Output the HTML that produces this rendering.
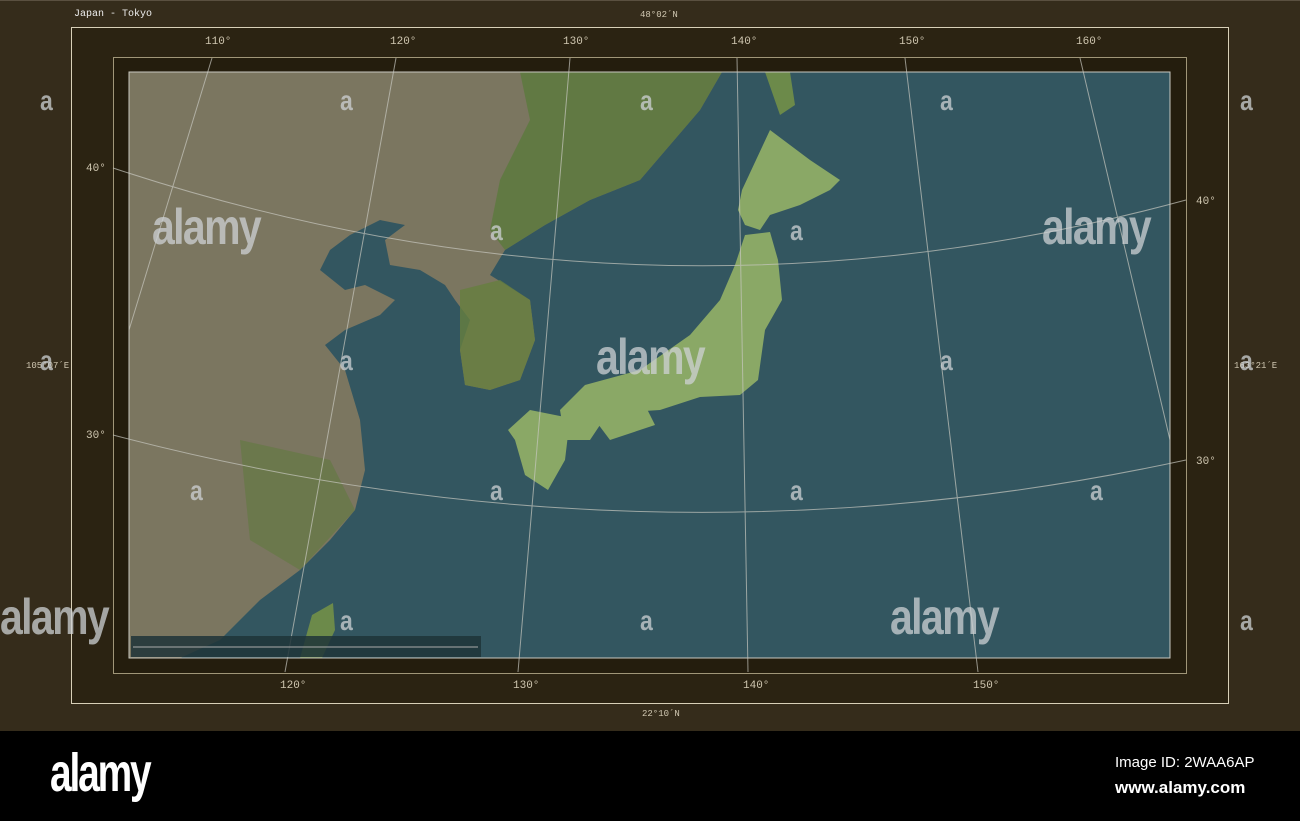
<!DOCTYPE html>
<html><head><meta charset="utf-8"><style>
html,body{margin:0;padding:0;width:1300px;height:821px;overflow:hidden;background:#000;font-family:"Liberation Mono",monospace}
.t{position:absolute;color:#cfc6b0;font-size:11px}
.g{position:absolute;font-family:"Liberation Sans",sans-serif;font-weight:bold;color:rgba(205,210,212,.75);letter-spacing:-2px;transform:scaleX(.82);transform-origin:left top}
</style></head><body>
<div style="position:absolute;left:0;top:0;width:1300px;height:730px;background:#352c1b;border-top:1px solid #5a5040"></div>
<div style="position:absolute;left:71px;top:27px;width:1156px;height:675px;background:#2b2312;border:1px solid #d8d0b8"></div>
<div style="position:absolute;left:113px;top:57px;width:1072px;height:615px;background:#241d0d;border:1px solid #a09678"></div>
<div class="t" style="left:74px;top:9px;font-size:10px;color:#eee">Japan - Tokyo</div>
<div class="t" style="left:640px;top:10px;font-size:9px">48°02´N</div>
<div class="t" style="left:642px;top:709px;font-size:9px">22°10´N</div>
<div class="t" style="left:26px;top:361px;font-size:9px">105°07´E</div>
<div class="t" style="left:1234px;top:361px;font-size:9px">163°21´E</div>
<div class="t" style="left:205px;top:36px">110°</div><div class="t" style="left:390px;top:36px">120°</div><div class="t" style="left:563px;top:36px">130°</div><div class="t" style="left:731px;top:36px">140°</div><div class="t" style="left:899px;top:36px">150°</div><div class="t" style="left:1076px;top:36px">160°</div>
<div class="t" style="left:280px;top:680px">120°</div><div class="t" style="left:513px;top:680px">130°</div><div class="t" style="left:743px;top:680px">140°</div><div class="t" style="left:973px;top:680px">150°</div>
<div class="t" style="left:86px;top:163px">40°</div><div class="t" style="left:86px;top:430px">30°</div>
<div class="t" style="left:1196px;top:196px">40°</div><div class="t" style="left:1196px;top:456px">30°</div>
<svg style="position:absolute;left:0;top:0" width="1300" height="730">
<rect x="129" y="72" width="1041" height="586" fill="#335660"/>
<polygon fill="#7b7660" points="129,72 722,72 700,110 640,180 590,200 545,225 505,250 490,275 530,300 535,340 520,380 490,390 465,385 460,350 470,320 455,300 445,285 420,270 390,265 385,240 405,225 380,220 350,235 330,250 320,270 345,290 365,285 395,300 380,315 345,330 325,345 345,370 360,420 365,470 355,510 330,540 300,570 260,600 220,640 180,658 129,658"/>
<polygon fill="#5d7a3e" opacity=".85" points="520,72 722,72 700,110 640,180 590,200 545,225 505,250 490,230 500,180 530,120"/>
<polygon fill="#66803f" opacity=".8" points="460,290 500,280 530,300 535,340 520,380 490,390 465,385 460,350"/>
<polygon fill="#607a40" opacity=".6" points="240,440 330,460 355,510 300,570 250,540"/>
<polygon fill="#6c8a4a" points="765,72 790,72 795,105 780,115"/>
<polygon fill="#8aa866" points="742,190 770,130 810,160 840,180 830,190 800,205 770,215 760,230 745,225 738,210"/>
<polygon fill="#8aa866" points="745,235 770,232 778,260 782,300 765,330 758,380 740,395 700,397 660,410 630,412 600,425 590,440 565,440 560,410 585,385 640,370 690,335 720,300 735,265"/>
<polygon fill="#8aa866" points="530,410 570,418 565,460 548,490 525,475 515,440 508,430"/>
<polygon fill="#8aa866" points="595,420 645,405 655,425 610,440"/>
<polygon fill="#6c8a4a" points="300,658 312,615 333,603 335,630 322,658"/>
<g stroke="#c8c8c0" stroke-width="1" fill="none" opacity=".7">
<path d="M212,58 L129,330"/><path d="M396,58 L285,672"/><path d="M570,58 L518,672"/><path d="M737,58 L748,672"/><path d="M905,58 L978,672"/><path d="M1080,58 L1170,440"/>
<path d="M113,168 Q650,346 1186,200"/><path d="M113,435 Q650,576 1186,460"/>
</g>
<rect x="129" y="72" width="1041" height="586" fill="none" stroke="#c8c8c0" stroke-width="1"/>
<rect x="131" y="636" width="350" height="21" fill="#1f3438" opacity=".85"/>
<line x1="133" y1="647" x2="478" y2="647" stroke="#aaa" stroke-width="1"/>
</svg>
<div class="g" style="left:152px;top:198px;font-size:50px">alamy</div>
<div class="g" style="left:1042px;top:198px;font-size:50px">alamy</div>
<div class="g" style="left:596px;top:328px;font-size:50px">alamy</div>
<div class="g" style="left:890px;top:588px;font-size:50px">alamy</div>
<div class="g" style="left:0px;top:588px;font-size:50px">alamy</div>
<div class="g" style="left:40px;top:85px;font-size:28px">a</div><div class="g" style="left:340px;top:85px;font-size:28px">a</div><div class="g" style="left:640px;top:85px;font-size:28px">a</div><div class="g" style="left:940px;top:85px;font-size:28px">a</div><div class="g" style="left:1240px;top:85px;font-size:28px">a</div>
<div class="g" style="left:490px;top:215px;font-size:28px">a</div><div class="g" style="left:790px;top:215px;font-size:28px">a</div>
<div class="g" style="left:40px;top:345px;font-size:28px">a</div><div class="g" style="left:340px;top:345px;font-size:28px">a</div><div class="g" style="left:940px;top:345px;font-size:28px">a</div><div class="g" style="left:1240px;top:345px;font-size:28px">a</div>
<div class="g" style="left:190px;top:475px;font-size:28px">a</div><div class="g" style="left:490px;top:475px;font-size:28px">a</div><div class="g" style="left:790px;top:475px;font-size:28px">a</div><div class="g" style="left:1090px;top:475px;font-size:28px">a</div>
<div class="g" style="left:340px;top:605px;font-size:28px">a</div><div class="g" style="left:640px;top:605px;font-size:28px">a</div><div class="g" style="left:1240px;top:605px;font-size:28px">a</div>
<div style="position:absolute;left:50px;top:742px;font-family:'Liberation Sans',sans-serif;font-weight:bold;font-size:54px;color:#fff;letter-spacing:-3px;transform:scaleX(.72);transform-origin:left top">alamy</div>
<div style="position:absolute;left:1115px;top:754px;font-family:'Liberation Sans',sans-serif;font-size:15px;color:#fff">Image ID: 2WAA6AP</div>
<div style="position:absolute;left:1115px;top:778px;font-family:'Liberation Sans',sans-serif;font-weight:bold;font-size:17px;color:#fff">www.alamy.com</div>
</body></html>
